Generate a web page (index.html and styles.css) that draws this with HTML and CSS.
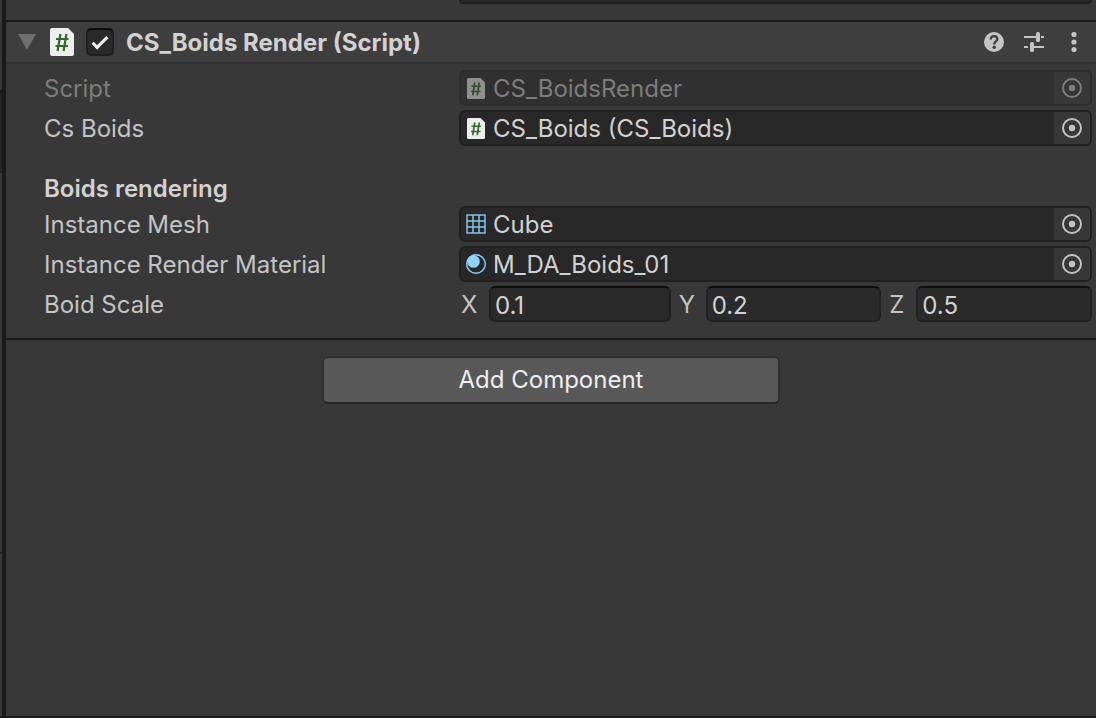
FILE: index.html
```html
<!DOCTYPE html>
<html lang="en">
<head>
<meta charset="utf-8">
<title>Inspector</title>
<link rel="stylesheet" href="styles.css">
</head>
<body>
<svg class="defs" aria-hidden="true">
  <symbol id="script-icon" viewBox="0 0 24 28">
    <path d="M2 0H18L24 6V26Q24 28 22 28H2Q0 28 0 26V2Q0 0 2 0Z" fill="#eee"/>
    <path d="M10.400 6L7.600 23M16.400 6L13.600 23M6 11H18.500M5.500 18H18" fill="none" stroke="#2f6b2b" stroke-width="2.200"/>
  </symbol>
  <symbol id="target-icon" viewBox="0 0 20 20">
    <circle cx="10" cy="10" r="9" fill="none" stroke="currentColor" stroke-width="2"/>
    <circle cx="10" cy="10" r="3.200" fill="currentColor"/>
  </symbol>
</svg>
<div class="window">
  <aside class="neighbour">
    <div class="neighbour-top"></div>
    <div class="neighbour-tab"></div>
    <div class="neighbour-body"></div>
    <div class="neighbour-foot"></div>
  </aside>
  <main class="inspector">
    <div class="previous"><div class="previous-field"></div></div>
    <section class="component">
      <header class="component-header">
        <button class="foldout" aria-label="Collapse"><svg width="18" height="16" viewBox="0 0 18 16"><path d="M0 0H18L9 16Z" fill="#6e6e6e"/></svg></button>
        <svg class="header-script" width="24" height="28"><use href="#script-icon"/></svg>
        <input class="enabled" id="enabled" type="checkbox" checked>
        <label class="title" for="enabled">CS_Boids Render (Script)</label>
        <div class="actions">
          <button aria-label="Help"><svg width="20" height="20" viewBox="0 0 20 20"><circle cx="10" cy="10" r="10" fill="#c4c4c4"/><path d="M6.700 7.500C6.700 5.200 8.200 4.100 10 4.100S13.300 5.200 13.300 7.200C13.300 9.400 10.200 9.600 10.200 12.400" fill="none" stroke="#3e3e3e" stroke-width="2.200"/><circle cx="10.200" cy="15.300" r="1.700" fill="#3e3e3e"/></svg></button>
          <button aria-label="Presets"><svg width="20" height="20" viewBox="0 0 20 20"><path d="M0 5H12M17 5H20M0 15H4M10 15H20" stroke="#c4c4c4" stroke-width="2"/><rect x="12" width="4" height="10" rx="1.500" fill="#c4c4c4"/><rect x="6" y="10" width="4" height="10" rx="1.500" fill="#c4c4c4"/></svg></button>
          <button aria-label="More"><svg width="20" height="20" viewBox="0 0 20 20"><g fill="#c4c4c4"><circle cx="10" cy="2.500" r="2.600"/><circle cx="10" cy="10" r="2.600"/><circle cx="10" cy="17.500" r="2.600"/></g></svg></button>
        </div>
      </header>
      <div class="properties">
        <div class="row disabled">
          <span class="label">Script</span>
          <div class="object"><svg class="object-icon" width="18" height="21"><use href="#script-icon"/></svg><span class="object-name">CS_BoidsRender</span><button class="picker" aria-label="Select script" disabled><svg width="20" height="20"><use href="#target-icon"/></svg></button></div>
        </div>
        <div class="row">
          <span class="label">Cs Boids</span>
          <div class="object"><svg class="object-icon" width="18" height="21"><use href="#script-icon"/></svg><span class="object-name">CS_Boids (CS_Boids)</span><button class="picker" aria-label="Select Cs Boids"><svg width="20" height="20"><use href="#target-icon"/></svg></button></div>
        </div>
        <h2 class="group">Boids rendering</h2>
        <div class="row">
          <span class="label">Instance Mesh</span>
          <div class="object"><svg class="object-icon" width="20" height="20" viewBox="0 0 20 20"><path d="M1 1H19V19H1ZM7 1V19M13 1V19M1 7H19M1 13H19" fill="none" stroke="#82c4ea" stroke-width="1.500"/></svg><span class="object-name">Cube</span><button class="picker" aria-label="Select mesh"><svg width="20" height="20"><use href="#target-icon"/></svg></button></div>
        </div>
        <div class="row">
          <span class="label">Instance Render Material</span>
          <div class="object"><svg class="object-icon" width="20" height="20" viewBox="0 0 20 20"><circle cx="10" cy="10" r="9.300" fill="none" stroke="#8fd3fb" stroke-width="1.400"/><circle cx="7.500" cy="7.500" r="6.300" fill="#8fd3fb"/></svg><span class="object-name">M_DA_Boids_01</span><button class="picker" aria-label="Select material"><svg width="20" height="20"><use href="#target-icon"/></svg></button></div>
        </div>
        <div class="row">
          <span class="label">Boid Scale</span>
          <div class="vector">
            <label class="axis axis-x"><span>X</span><input type="text" value="0.1"></label>
            <label class="axis"><span>Y</span><input type="text" value="0.2"></label>
            <label class="axis"><span>Z</span><input type="text" value="0.5"></label>
          </div>
        </div>
      </div>
    </section>
    <button class="add">Add Component</button>
  </main>
</div>
</body>
</html>
```
FILE: styles.css
```css
* { box-sizing: border-box; }
body {
  margin: 0;
  background: #383838;
  color: #c4c4c4;
  font: 24px/38px Inter, "Liberation Sans", sans-serif;
}
button {
  border: 0;
  padding: 0;
  background: none;
  color: inherit;
  font: inherit;
}
svg { display: block; flex: none; }
.defs { position: absolute; width: 0; height: 0; }
.window {
  display: flex;
  min-height: 100vh;
  border-bottom: 2px solid #1b1b1b;
}
.neighbour {
  display: flex;
  flex-direction: column;
  width: 6px;
  border-right: 4px solid #1a1a1a;
}
.neighbour-top { height: 90px; }
.neighbour-tab { height: 83px; border-top: 4px solid #191919; background: #262626; }
.neighbour-body { height: 379px; }
.neighbour-foot { flex: 1; border-top: 2px solid #222; }
.inspector { flex: 1; min-width: 0; }
.previous { height: 20px; padding: 0 4px 0 453px; }
.previous-field {
  height: 4px;
  border: 2px solid #202020;
  border-top: 0;
  border-radius: 0 0 5px 5px;
  background: #2a2a2a;
}
.component {
  border-top: 2px solid #1a1a1a;
  border-bottom: 2px solid #1a1a1a;
}
.component-header {
  display: flex;
  align-items: center;
  height: 42px;
  padding: 0 12px;
  border-bottom: 2px solid #303030;
  background: #3e3e3e;
}
.header-script { margin: 0 12px 0 14px; }
.enabled {
  appearance: none;
  width: 28px;
  height: 28px;
  margin: 0 12px 0 0;
  border: 2px solid #1f1f1f;
  border-top-color: #0f0f0f;
  border-radius: 5px;
  background: #2a2a2a;
}
.enabled:checked::before {
  content: "";
  display: block;
  box-sizing: border-box;
  width: 16px;
  height: 8px;
  margin: 7px 0 0 4px;
  border: solid #eee;
  border-width: 0 0 3px 3px;
  transform: rotate(-45deg);
}
.title { padding-top: 2px; color: #d2d2d2; font-weight: 700; }
.actions { display: flex; gap: 20px; margin-left: auto; }
.properties { padding: 6px 4px 16px 38px; }
.row {
  display: grid;
  grid-template-columns: 415px minmax(0, 1fr);
  grid-template-rows: 36px;
  margin-bottom: 4px;
}
.row:last-child { margin-bottom: 0; }
.object {
  display: flex;
  align-items: center;
  border: 2px solid #202020;
  border-radius: 6px;
  background: #282828;
  overflow: hidden;
}
.object-icon { width: 20px; margin: 0 7px 0 5px; }
.object-name { flex: 1; padding-top: 2px; color: #d2d2d2; line-height: 30px; }
.picker {
  display: flex;
  align-items: center;
  justify-content: center;
  width: 36px;
  height: 32px;
  background: #373737;
}
.disabled .label,
.disabled .object-name,
.disabled .picker { color: #7d7d7d; }
.disabled .object { border-color: #2c2c2c; background: #303030; }
.disabled .object-icon { opacity: .5; }
.group {
  height: 56px;
  margin: 0;
  padding-top: 20px;
  color: #d2d2d2;
  font-size: 24px;
  font-weight: 600;
}
.vector {
  display: grid;
  grid-template-columns: minmax(0, 211fr) minmax(0, 202fr) minmax(0, 202fr);
  gap: 8px;
}
.axis { display: flex; }
.axis span { width: 27px; }
.axis-x span { width: 30px; padding-left: 2px; }
.axis input {
  flex: 1;
  min-width: 0;
  height: 36px;
  padding: 2px 4px 0;
  border: 2px solid #212121;
  border-top-color: #0e0e0e;
  border-radius: 6px;
  background: #2a2a2a;
  color: #d2d2d2;
  font: inherit;
  line-height: 30px;
}
.add {
  display: block;
  width: 42%;
  height: 48px;
  margin: 16px auto 0;
  border: 2px solid #303030;
  border-bottom-color: #242424;
  border-radius: 6px;
  background: #585858;
  color: #eee;
}
```
